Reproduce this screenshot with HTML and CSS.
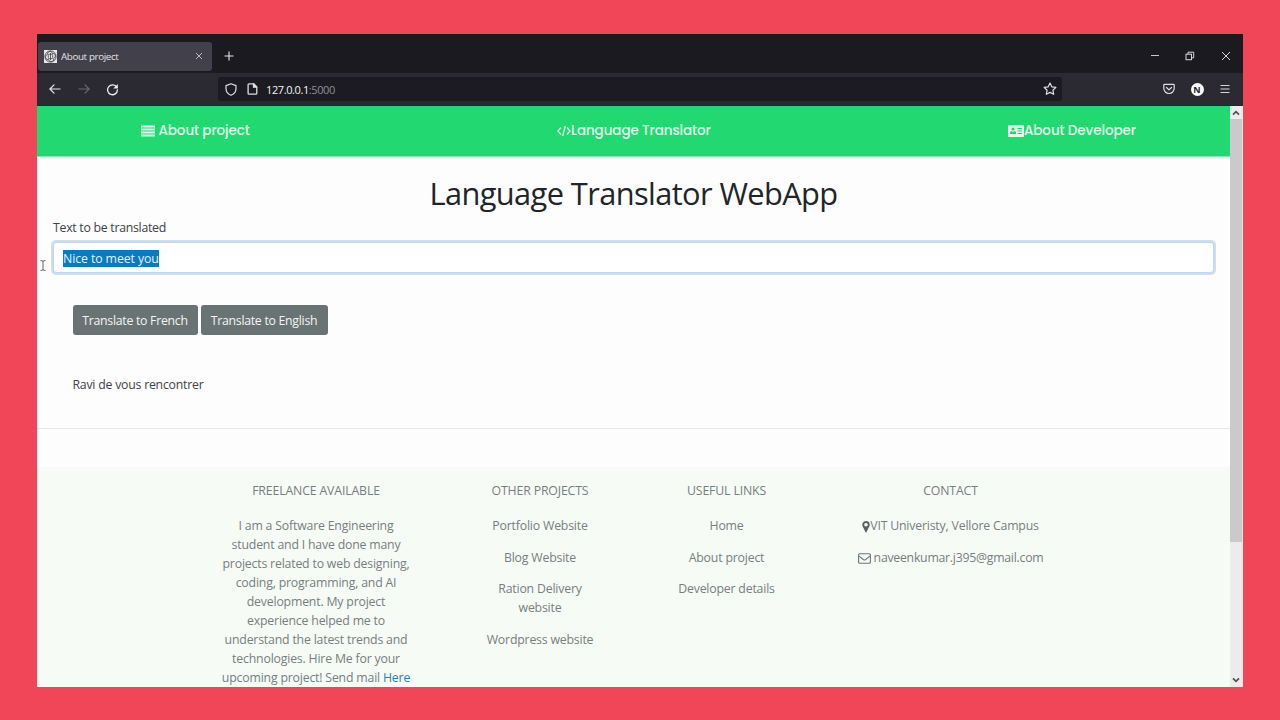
FILE: index.html
```html
<!DOCTYPE html>
<html lang="en">
<head>
<meta charset="utf-8">
<title>About project</title>
<link rel="stylesheet" href="styles.css">
</head>
<body>
<div class="window">
  <div class="tabbar">
    <div class="tab">
      <svg class="favicon" viewBox="0 0 13 13"><rect width="13" height="13" fill="#e8e8ea"/><g fill="none" stroke="#3a3a40" stroke-width=".8"><circle cx="6.500" cy="6.500" r="5.600"/><path d="M6 1.200Q3 2 3.500 4.500 1 5 1.500 7.500 2 10 4.500 9.500 5 12 7.500 11.600 10.500 11 9.700 8.500 12 7.500 11.300 5 10.500 3 8.500 3.600 8 1.200 6 1.200z"/><rect x="4.300" y="4.300" width="4.400" height="4.400" rx="1"/><path d="M6.500 3v7"/></g></svg>
      <span class="tab-title">About project</span>
      <svg class="tab-close" viewBox="0 0 8 8"><path d="M1 1l6 6M7 1L1 7" stroke="#c9c8ce" stroke-width=".9"/></svg>
    </div>
    <svg class="newtab" viewBox="0 0 10 10"><path d="M5 .5v9M.5 5h9" stroke="#e6e6ea" stroke-width="1.100"/></svg>
    <div class="controls">
      <svg width="8" height="10" viewBox="0 0 8 10"><path d="M0 4.500h8" stroke="#c8c8cc"/></svg>
      <svg width="10" height="10" viewBox="0 0 10 10" fill="none" stroke="#d8d8dc"><rect x="1" y="3.200" width="5.500" height="5.500"/><path d="M3 3V1.200h5.700v5.600H6.700"/></svg>
      <svg width="10" height="10" viewBox="0 0 10 10"><path d="M1 1l8 8M9 1L1 9" stroke="#d8d8dc"/></svg>
    </div>
  </div>
  <div class="toolbar">
    <div class="history">
      <svg width="12" height="12" viewBox="0 0 12 12" fill="none" stroke="#e4e4e8" stroke-width="1.200" stroke-linecap="round" stroke-linejoin="round"><path d="M11 6H1M5 1.800L.9 6 5 10.200"/></svg>
      <svg width="12" height="12" viewBox="0 0 12 12" fill="none" stroke="#6c6b74" stroke-width="1.100" stroke-linecap="round" stroke-linejoin="round"><path d="M1 6h10M7 1.800L11.100 6 7 10.200"/></svg>
      <svg width="13" height="13" viewBox="0 0 13 13"><path d="M10.700 4.300A4.900 4.900 0 1 0 11.400 7" fill="none" stroke="#eeeef2" stroke-width="1.300" stroke-linecap="round"/><path d="M11.800 1v4.600H7.300z" fill="#eeeef2"/></svg>
    </div>
    <div class="urlbar">
      <svg width="12" height="13" viewBox="0 0 12 13" fill="none" stroke="#dedee2" stroke-width="1.200" stroke-linejoin="round"><path d="M6 .8L11 2.600v2.800C11 8.800 9 11 6 12.300 3 11 1 8.800 1 5.400V2.600z"/></svg>
      <svg class="page-icon" width="11" height="12" viewBox="0 0 11 12" fill="none" stroke="#dedee2" stroke-width="1.300" stroke-linejoin="round"><path d="M2 .8h4.700L9.800 4v6.300q0 .9-.9.900H2q-.9 0-.9-.9V1.700Q1.100.8 2 .8z"/><path d="M6.500 1v3.200h3.200z" fill="#dedee2"/></svg>
      <span class="url">127.0.0.1<span class="port">:5000</span></span>
      <svg class="star" width="14" height="14" viewBox="0 0 14 14" fill="none" stroke="#dedee2" stroke-width="1.200" stroke-linejoin="round"><path d="M7 1.100l1.800 3.700 4.100.6-3 2.800.8 4.100L7 10.400l-3.700 1.900.8-4.100-3-2.800 4.100-.6z"/></svg>
    </div>
    <div class="tools">
      <svg width="12" height="12" viewBox="0 0 12 12" fill="none" stroke="#dedee2" stroke-width="1.200" stroke-linecap="round" stroke-linejoin="round"><path d="M1.500 1.300h9q.7 0 .7.700v3.300a5.200 5.200 0 0 1-10.400 0V2q0-.7.700-.7zM3.500 4.500L6 6.900l2.500-2.400"/></svg>
      <span class="avatar">N</span>
      <svg width="10" height="10" viewBox="0 0 10 10"><path d="M.5 1.500h9M.5 5h9M.5 8.500h9" stroke="#d4d4d8" stroke-width="1.100"/></svg>
    </div>
  </div>
  <div class="viewport">
    <div class="page">
      <nav class="nav">
        <a class="link about"><svg width="14" height="12" viewBox="0 0 14 12"><path d="M0 1.500h14M0 4.500h14M0 7.500h14M0 10.500h14" stroke="#e6faee" stroke-width="2"/></svg><span>About project</span></a>
        <a class="link translator"><svg width="14" height="12" viewBox="0 0 14 12" fill="none" stroke="#d2f9e0" stroke-width="1.400"><path d="M4 2.500L1 6l3 3.500M10 2.500L13 6l-3 3.500M8.300 1L5.700 11"/></svg><span>Language Translator</span></a>
        <a class="link developer"><svg width="16" height="12" viewBox="0 0 16 12"><rect width="16" height="12" rx="1" fill="#e2fbeb"/><g fill="#27d26b"><circle cx="5" cy="4" r="1.600"/><path d="M2 9V7.500q0-1.500 1.500-1.500L5 7l1.500-1Q8 6 8 7.500V9zM9.500 3H14v1H9.500zM9.500 5.500H14v1H9.500zM9.500 8H14v1H9.500z"/></g></svg><span>About Developer</span></a>
      </nav>
      <main class="main">
        <h1 class="title">Language Translator WebApp</h1>
        <label class="label">Text to be translated</label>
        <div class="field"><span class="selected">Nice to meet you</span></div>
        <div class="buttons"><button class="btn french">Translate to French</button><button class="btn english">Translate to English</button></div>
        <p class="result">Ravi de vous rencontrer</p>
      </main>
      <footer class="footer">
        <section><h2>FREELANCE AVAILABLE</h2><p>I am a Software Engineering<br>student and I have done many<br>projects related to web designing,<br>coding, programming, and AI<br>development. My project<br>experience helped me to<br>understand the latest trends and<br>technologies. Hire Me for your<br>upcoming project! Send mail <a class="here">Here</a></p></section>
        <section><h2>OTHER PROJECTS</h2><p>Portfolio Website</p><p>Blog Website</p><p>Ration Delivery<br>website</p><p>Wordpress website</p></section>
        <section><h2>USEFUL LINKS</h2><p>Home</p><p>About project</p><p>Developer details</p></section>
        <section><h2>CONTACT</h2>
          <p class="contact"><svg width="8" height="12" viewBox="0 0 8 12"><path fill="#5b6064" fill-rule="evenodd" d="M4 0a3.700 3.700 0 0 1 3.700 3.700c0 .8-.2 1.300-.5 1.900L4.600 11q-.6 1-1.200 0L.8 5.600A3.700 3.700 0 0 1 4 0zm0 1.900a1.800 1.800 0 1 0 0 3.600 1.800 1.800 0 0 0 0-3.600z"/></svg><span>VIT Univeristy, Vellore Campus</span></p>
          <p class="contact mail"><svg width="13" height="11" viewBox="0 0 13 11" fill="none" stroke="#70777b" stroke-width="1.100"><rect x=".6" y=".8" width="11.800" height="9.400" rx="1"/><path d="M.8 2.800l4.500 3.700q1.200.9 2.400 0l4.500-3.700"/></svg><span>naveenkumar.j395@gmail.com</span></p>
        </section>
      </footer>
    </div>
    <div class="scrollbar">
      <div class="arrow"><svg width="8" height="6" viewBox="0 0 8 6"><path d="M1 4.600l3-3 3 3" fill="none" stroke="#505050" stroke-width="1.700"/></svg></div>
      <div class="thumb"></div>
      <div class="arrow down"><svg width="8" height="6" viewBox="0 0 8 6"><path d="M1 1.400l3 3 3-3" fill="none" stroke="#505050" stroke-width="1.700"/></svg></div>
    </div>
  </div>
  <svg class="cursor" width="6" height="11" viewBox="0 0 6 11"><path d="M.5.600Q2.500.500 3 1.300 3.500.500 5.500.600M3 1v9M.5 10.400q2 .1 2.500-.7.500.8 2.500.7" fill="none" stroke="#555" stroke-width=".9"/></svg>
</div>
</body>
</html>
```
FILE: styles.css
```css
* { box-sizing: border-box; }
body { margin: 0; width: 1280px; height: 720px; overflow: hidden; padding: 34px 37px; background: #f04658; font-family: "Open Sans", "Noto Sans", sans-serif; }
svg { display: block; flex: none; }
.window { position: relative; width: 1206px; height: 652.500px; display: flex; flex-direction: column; overflow: hidden; }
.tabbar { height: 39px; flex: none; background: #1b1a20; display: flex; align-items: center; padding: 6px 12.500px 0 1px; }
.tab { width: 174px; height: 29px; margin-bottom: 1px; background: #42414b; border-radius: 3px; display: flex; align-items: center; padding: 0 9px 0 6px; }
.favicon { width: 13px; height: 13px; }
.tab-title { font-size: 9.800px; letter-spacing: -.37px; color: #e2e1e6; margin-left: 4px; white-space: nowrap; }
.tab-close { width: 8px; height: 8px; margin-left: auto; }
.newtab { width: 10px; height: 10px; margin: 0 0 1px 11.500px; }
.controls { display: flex; align-items: center; margin: 0 0 1px auto; gap: 26px; }
.toolbar { height: 33px; flex: none; background: #2b2a32; display: flex; align-items: center; padding: 0 13.500px 0 12px; border-bottom: 1px solid #1d2b27; }
.history { display: flex; align-items: center; gap: 16.500px; width: 169px; }
.urlbar { width: 844px; height: 24px; border-radius: 3px; background: #1c1b22; display: flex; align-items: center; padding: 0 5px 0 7px; }
.page-icon { margin-left: 10px; }
.url { margin-left: 8px; font-size: 11px; line-height: 15px; padding-top: 1px; letter-spacing: -.4px; color: #f4f4f6; white-space: nowrap; }
.port { color: #8f8e96; }
.star { margin-left: auto; }
.tools { margin-left: auto; display: flex; align-items: center; gap: 16px; }
.avatar { width: 13px; height: 13px; border-radius: 50%; background: #fff; color: #222; font: bold 9px/13px "Open Sans", sans-serif; text-align: center; }
.viewport { flex: 1; min-height: 0; display: flex; }
.page { width: 1193px; background: #fdfdfd; overflow: hidden; }
.nav { height: 51px; background: #21d970; border-bottom: 1px solid #8deab3; display: flex; align-items: center; padding-left: 104px; }
.link { display: flex; align-items: center; color: #e4fced; font: 500 13.500px/20px Poppins, Inter, sans-serif; letter-spacing: -.1px; white-space: nowrap; }
.about { width: 416px; gap: 3.500px; }
.translator { width: 451px; }
.main { height: 272px; padding: 17px 16px 0 16px; border-bottom: 1px solid #e7e7e9; display: flex; flex-direction: column; }
.title { margin: 0; text-align: center; font-size: 30.800px; letter-spacing: -.6px; font-weight: 400; line-height: 38px; color: #212529; }
.label { margin-top: 6px; font-size: 12.300px; letter-spacing: -.27px; line-height: 19px; color: #3d4144; }
.field { margin-top: 5px; height: 31px; border: 1px solid #bfd6ec; border-radius: 3px; background: #fff; box-shadow: 0 0 0 2px #cddfee; display: flex; align-items: center; padding: 1px 0 0 9px; }
.selected { background: #0b7bc1; color: #e6f3fc; font-size: 12.300px; letter-spacing: -.09px; line-height: 17px; white-space: nowrap; }
.buttons { margin: 32px 0 0 19.500px; display: flex; gap: 3px; }
.btn { height: 30px; padding: 1px 0 0; border: 0; border-radius: 3px; background: #697373; color: #f3f5f5; font: 12.300px/19px "Open Sans", sans-serif; letter-spacing: -.28px; white-space: nowrap; }
.french { width: 125px; }
.english { width: 127px; }
.result { margin: 40px 0 0 19.500px; font-size: 12.300px; letter-spacing: -.23px; line-height: 19px; color: #3f4346; }
.footer { margin-top: 38px; height: 221px; background: #f6fbf6; display: grid; grid-template-columns: 200px 120px 125px 195px; column-gap: 64px; padding: 14.500px 0 0 179px; color: #787e80; font-size: 12.300px; letter-spacing: -.19px; line-height: 18.900px; text-align: center; white-space: nowrap; }
.footer h2 { margin: 0 0 17px; font-size: 12.300px; letter-spacing: -.15px; font-weight: 400; }
.footer p { margin: 0 0 12.600px; }
.here { color: #2a7fbd; }
.contact { display: flex; align-items: center; justify-content: center; }
.mail { gap: 3px; letter-spacing: -.26px; }
.scrollbar { width: 13px; background: #ececec; display: flex; flex-direction: column; border-right: 1px solid #f3e5e6; }
.arrow { height: 13px; display: flex; align-items: center; justify-content: center; }
.thumb { height: 423px; background: #cacaca; }
.down { margin-top: auto; }
.cursor { position: absolute; left: 3px; top: 226px; }
```
